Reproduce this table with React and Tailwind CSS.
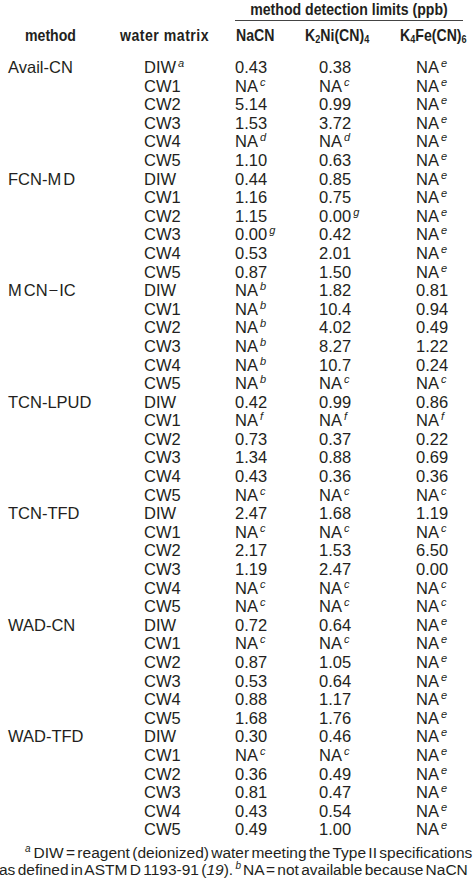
import React from "react";

const rows = [
  ["Avail-CN", [["DIW", "a"], ["0.43"], ["0.38"], ["NA", "e"]]],
  ["", [["CW1"], ["NA", "c"], ["NA", "c"], ["NA", "e"]]],
  ["", [["CW2"], ["5.14"], ["0.99"], ["NA", "e"]]],
  ["", [["CW3"], ["1.53"], ["3.72"], ["NA", "e"]]],
  ["", [["CW4"], ["NA", "d"], ["NA", "d"], ["NA", "e"]]],
  ["", [["CW5"], ["1.10"], ["0.63"], ["NA", "e"]]],
  ["FCN-MD", [["DIW"], ["0.44"], ["0.85"], ["NA", "e"]]],
  ["", [["CW1"], ["1.16"], ["0.75"], ["NA", "e"]]],
  ["", [["CW2"], ["1.15"], ["0.00", "g"], ["NA", "e"]]],
  ["", [["CW3"], ["0.00", "g"], ["0.42"], ["NA", "e"]]],
  ["", [["CW4"], ["0.53"], ["2.01"], ["NA", "e"]]],
  ["", [["CW5"], ["0.87"], ["1.50"], ["NA", "e"]]],
  ["MCN\u2212IC", [["DIW"], ["NA", "b"], ["1.82"], ["0.81"]]],
  ["", [["CW1"], ["NA", "b"], ["10.4"], ["0.94"]]],
  ["", [["CW2"], ["NA", "b"], ["4.02"], ["0.49"]]],
  ["", [["CW3"], ["NA", "b"], ["8.27"], ["1.22"]]],
  ["", [["CW4"], ["NA", "b"], ["10.7"], ["0.24"]]],
  ["", [["CW5"], ["NA", "b"], ["NA", "c"], ["NA", "c"]]],
  ["TCN-LPUD", [["DIW"], ["0.42"], ["0.99"], ["0.86"]]],
  ["", [["CW1"], ["NA", "f"], ["NA", "f"], ["NA", "f"]]],
  ["", [["CW2"], ["0.73"], ["0.37"], ["0.22"]]],
  ["", [["CW3"], ["1.34"], ["0.88"], ["0.69"]]],
  ["", [["CW4"], ["0.43"], ["0.36"], ["0.36"]]],
  ["", [["CW5"], ["NA", "c"], ["NA", "c"], ["NA", "c"]]],
  ["TCN-TFD", [["DIW"], ["2.47"], ["1.68"], ["1.19"]]],
  ["", [["CW1"], ["NA", "c"], ["NA", "c"], ["NA", "c"]]],
  ["", [["CW2"], ["2.17"], ["1.53"], ["6.50"]]],
  ["", [["CW3"], ["1.19"], ["2.47"], ["0.00"]]],
  ["", [["CW4"], ["NA", "c"], ["NA", "c"], ["NA", "c"]]],
  ["", [["CW5"], ["NA", "c"], ["NA", "c"], ["NA", "c"]]],
  ["WAD-CN", [["DIW"], ["0.72"], ["0.64"], ["NA", "e"]]],
  ["", [["CW1"], ["NA", "c"], ["NA", "c"], ["NA", "e"]]],
  ["", [["CW2"], ["0.87"], ["1.05"], ["NA", "e"]]],
  ["", [["CW3"], ["0.53"], ["0.64"], ["NA", "e"]]],
  ["", [["CW4"], ["0.88"], ["1.17"], ["NA", "e"]]],
  ["", [["CW5"], ["1.68"], ["1.76"], ["NA", "e"]]],
  ["WAD-TFD", [["DIW"], ["0.30"], ["0.46"], ["NA", "e"]]],
  ["", [["CW1"], ["NA", "c"], ["NA", "c"], ["NA", "e"]]],
  ["", [["CW2"], ["0.36"], ["0.49"], ["NA", "e"]]],
  ["", [["CW3"], ["0.81"], ["0.47"], ["NA", "e"]]],
  ["", [["CW4"], ["0.43"], ["0.54"], ["NA", "e"]]],
  ["", [["CW5"], ["0.49"], ["1.00"], ["NA", "e"]]],
];

function Cell({ v }) {
  return (
    <span>
      {v[0]}
      {v[1] ? (
        <sup className="ml-[2px] text-[11px] italic align-baseline relative top-[-6px]">{v[1]}</sup>
      ) : null}
    </span>
  );
}

function MethodName({ name }) {
  if (name === "FCN-MD") {
    return (
      <span>
        FCN-M<span className="ml-[2px]">D</span>
      </span>
    );
  }
  if (name === "MCN\u2212IC") {
    return (
      <span>
        M<span className="ml-[2px]">CN</span>
        <span className="mx-[1px]">{"\u2212"}</span>IC
      </span>
    );
  }
  return <span>{name}</span>;
}

function Sub({ children }) {
  return <sub className="text-[11px] align-baseline relative top-[2px]">{children}</sub>;
}

function Cond({ children, center }) {
  return (
    <span
      className={`inline-block whitespace-nowrap scale-x-[0.83] ${center ? "origin-center" : "origin-left"}`}
    >
      {children}
    </span>
  );
}

export default function App() {
  return (
    <div className="w-[474px] h-[883px] overflow-hidden bg-white text-[#231f20] font-['Liberation_Sans',Arial,sans-serif]">
      {/* header line 1 */}
      <div className="ml-[235px] w-[228px] h-[21px] border-b-[1.5px] border-[#444] flex justify-center whitespace-nowrap font-bold text-[17px] leading-[19px]">
        <Cond center>method detection limits (ppb)</Cond>
      </div>
      {/* header line 2 */}
      <div className="mt-[5px] h-[20px] grid grid-cols-[120px_115px_69px_95px_1fr] whitespace-nowrap font-bold text-[17px] leading-[20px]">
        <div className="pl-[25px]">
          <Cond>method</Cond>
        </div>
        <div>
          <Cond>
            <span className="tracking-[0.6px]">water matrix</span>
          </Cond>
        </div>
        <div className="pl-[1px]">
          <Cond>NaCN</Cond>
        </div>
        <div className="pl-[1px]">
          <Cond>
            K<Sub>2</Sub>Ni(CN)<Sub>4</Sub>
          </Cond>
        </div>
        <div className="pl-[1px]">
          <Cond>
            K<Sub>4</Sub>Fe(CN)<Sub>6</Sub>
          </Cond>
        </div>
      </div>
      {/* data */}
      <div className="mt-[12px] flex flex-col text-[16.5px]">
        {rows.map(([method, cells], i) => (
          <div key={i} className="h-[18.6px] leading-[18.6px] grid grid-cols-[144px_91px_84px_97px_1fr] whitespace-nowrap">
            <div className="pl-[8px]">{method ? <MethodName name={method} /> : null}</div>
            <div>
              <Cell v={cells[0]} />
            </div>
            <div>
              <Cell v={cells[1]} />
            </div>
            <div>
              <Cell v={cells[2]} />
            </div>
            <div>
              <Cell v={cells[3]} />
            </div>
          </div>
        ))}
      </div>
      {/* footnote */}
      <div className="mt-[5px] text-[15.5px] leading-[17px] whitespace-nowrap [word-spacing:-2px]">
        <div className="pl-[25px]">
          <sup className="text-[10px] italic align-baseline relative top-[-6px] mr-[3px]">a</sup>
          DIW = reagent (deionized) water meeting the Type II specifications
        </div>
        <div className="-ml-[1px]">
          as defined in ASTM D 1193-91 (<i>19</i>).{" "}
          <sup className="text-[10px] italic align-baseline relative top-[-6px] mr-[2px]">b</sup>
          NA = not available because NaCN
        </div>
      </div>
    </div>
  );
}
